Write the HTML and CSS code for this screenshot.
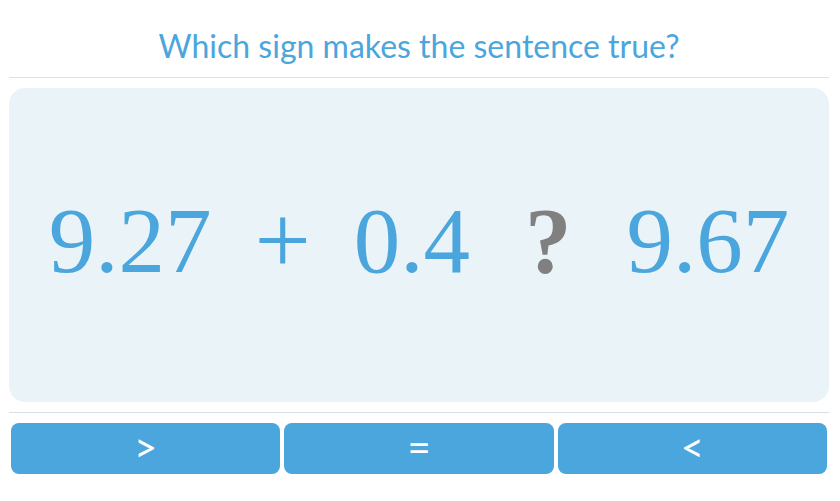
FILE: index.html
```html
<!DOCTYPE html>
<html>
<head>
<meta charset="utf-8">
<link rel="stylesheet" href="styles.css">
</head>
<body>
<div class="app">
  <h1 class="title">Which sign makes the sentence true?</h1>
  <div class="panel">
    <span class="num">9.27</span>
    <span class="op">+</span>
    <span class="num">0.4</span>
    <span class="q">?</span>
    <span class="num">9.67</span>
  </div>
  <div class="answers">
    <button class="btn">&gt;</button>
    <button class="btn">=</button>
    <button class="btn">&lt;</button>
  </div>
</div>
</body>
</html>
```
FILE: styles.css
```css
html, body {
  margin: 0;
  padding: 0;
  background: #ffffff;
}
.app {
  width: 820px;
  margin: 0 0 0 9px;
  display: flex;
  flex-direction: column;
}
.title {
  margin: 0;
  height: 78px;
  border-bottom: 1px solid #dedfe8;
  display: flex;
  align-items: center;
  justify-content: center;
  padding-top: 13px;
  box-sizing: border-box;
  font-family: Lato, "Open Sans", sans-serif;
  font-weight: 400;
  font-size: 32px;
  color: #4aa6dc;
}
.panel {
  margin-top: 10px;
  height: 314px;
  background: #eaf4f8;
  border-radius: 16px;
  display: flex;
  align-items: center;
  justify-content: center;
  gap: 43px;
  font-family: "Liberation Serif", "Times New Roman", serif;
  font-size: 93px;
  color: #4aa6dc;
  padding-bottom: 10px;
  box-sizing: border-box;
}
.op {
  font-size: 100px;
}
.q {
  color: #808080;
  font-weight: 700;
  margin: 0 12px;
}
.answers {
  margin-top: 10px;
  padding-top: 10px;
  border-top: 1px solid #d8e0e6;
  display: flex;
  gap: 4px;
  padding-left: 2px;
  padding-right: 2px;
}
.btn {
  flex: 1;
  height: 51px;
  border: none;
  border-radius: 8px;
  background: #4aa6dc;
  color: #ffffff;
  font-family: Lato, "Open Sans", sans-serif;
  font-size: 40px;
  line-height: 1;
  padding: 0 0 4px 0;
}
```
